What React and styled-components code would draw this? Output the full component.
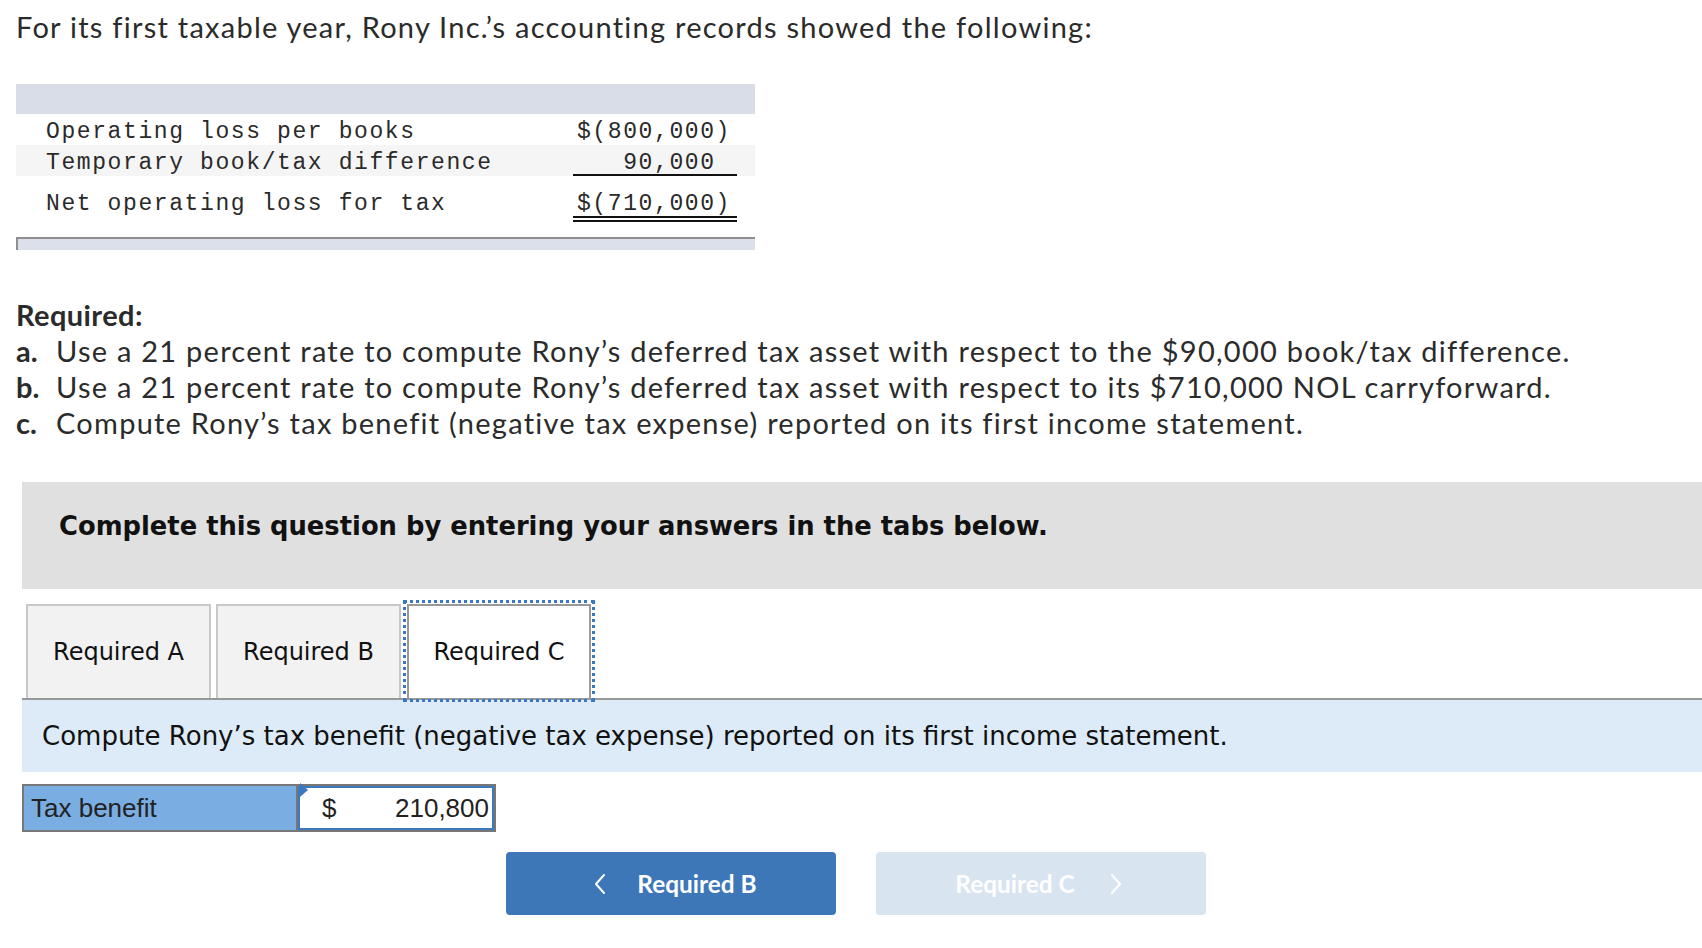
import React from 'react'
import styled, { createGlobalStyle } from 'styled-components'

const GlobalStyle = createGlobalStyle`
  body {
    margin: 0;
    background: #fff;
    color: #222;
    font-family: 'Lato', 'Liberation Sans', sans-serif;
  }
`

const Page = styled.div`
  width: 1702px;
  padding: 9px 0 30px 16px;
  box-sizing: border-box;
`

const Lead = styled.p`
  margin: 0;
  font-size: 29px;
  letter-spacing: 1.25px;
  line-height: 36px;
  color: #2b2b2b;
`

const Sheet = styled.div`
  width: 739px;
  margin-top: 39px;
  font-family: 'Liberation Mono', 'Courier New', monospace;
  font-size: 23px;
  letter-spacing: 1.6px;
  color: #2a2a2a;
`

const HeadBand = styled.div`
  height: 30px;
  background: #d8dde7;
`

const Row = styled.div`
  display: grid;
  grid-template-columns: 557px 164px;
  align-items: start;
  height: ${p => p.h || 31}px;
  background: ${p => (p.shade ? '#f5f5f5' : '#fff')};
`

const Label = styled.div`
  padding: ${p => p.top || 5}px 0 0 30px;
  line-height: 27px;
`

const Amount = styled.div`
  padding-top: ${p => p.top || 5}px;
  padding-right: 6px;
  height: ${p => p.lineH || 24}px;
  line-height: 27px;
  text-align: right;
  white-space: pre;
  border-bottom: ${p =>
    p.rule === 'double' ? '6px double #111' : p.rule ? '2px solid #111' : 'none'};
`

const FootBand = styled.div`
  margin-top: 9px;
  height: 11px;
  background: #dbe0ea;
  border-top: 2px solid #8e8e8e;
  border-left: 2px solid #8e8e8e;
`

const Required = styled.div`
  margin-top: 47px;
  font-size: 29px;
  letter-spacing: 1.25px;
  line-height: 36px;
  color: #2b2b2b;
`

const ReqTitle = styled.div`
  font-weight: 700;
  letter-spacing: 0.4px;
`

const ReqItem = styled.div`
  display: flex;
`

const ReqMark = styled.span`
  font-weight: 700;
  width: 40px;
  flex: none;
  letter-spacing: 0;
`

const Answer = styled.div`
  margin: 41px 0 0 6px;
`

const Notice = styled.div`
  height: 107px;
  background: #e0e0e0;
  padding: 26px 0 0 37px;
  box-sizing: border-box;
  font-family: 'DejaVu Sans', Verdana, sans-serif;
  font-weight: 700;
  font-size: 25.8px;
  line-height: 36px;
  color: #111;
`

const TabStrip = styled.div`
  display: flex;
  align-items: flex-end;
  gap: 5px;
  margin-top: 15px;
  padding-left: 4px;
  border-bottom: 2px solid #999;
`

const Tab = styled.div`
  width: ${p => (p.active ? 184 : 185)}px;
  height: 94px;
  box-sizing: border-box;
  margin-left: ${p => (p.active ? 1 : 0)}px;
  display: flex;
  align-items: center;
  justify-content: center;
  border: 2px solid ${p => (p.active ? '#999' : '#c8c8c8')};
  border-bottom: none;
  background: ${p => (p.active ? '#fff' : '#f2f2f2')};
  outline: ${p => (p.active ? '3px dotted #3c78c0' : 'none')};
  outline-offset: 1px;
  font-family: 'DejaVu Sans', Verdana, sans-serif;
  font-size: 24px;
  color: #111;
`

const Prompt = styled.div`
  height: 72px;
  background: #dcebf7;
  display: flex;
  align-items: center;
  padding-left: 20px;
  font-family: 'DejaVu Sans', Verdana, sans-serif;
  font-size: 26px;
  color: #111;
`

const EntryRow = styled.div`
  display: flex;
  margin-top: 12px;
  height: 48px;
  font-family: 'Liberation Sans', Arial, sans-serif;
  font-size: 26px;
  color: #222;
`

const EntryLabel = styled.div`
  width: 274px;
  box-sizing: border-box;
  background: #7aade1;
  border: 2px solid #777;
  border-right: none;
  display: flex;
  align-items: center;
  padding-left: 7px;
`

const EntryField = styled.div`
  position: relative;
  width: 200px;
  box-sizing: border-box;
  border: 2px solid #777;
  display: flex;
`

const FieldInner = styled.div`
  flex: 1;
  display: flex;
  align-items: center;
  justify-content: space-between;
  border: 2px solid #3c78c0;
  padding: 0 3px 0 22px;
  background: #fff;
`

const Flag = styled.span`
  position: absolute;
  left: 2px;
  top: 2px;
  width: 0;
  height: 0;
  border-top: 7px solid transparent;
  border-bottom: 7px solid transparent;
  border-left: 8px solid #3c78c0;
  transform: translateY(-5px);
`

const NavRow = styled.div`
  display: flex;
  gap: 40px;
  margin-top: 20px;
  padding-left: 484px;
`

const NavButton = styled.div`
  width: 330px;
  height: 63px;
  border-radius: 4px;
  display: flex;
  align-items: center;
  justify-content: center;
  gap: ${p => (p.next ? 34 : 30)}px;
  padding-left: ${p => (p.next ? 0 : 8)}px;
  padding-right: ${p => (p.next ? 4 : 0)}px;
  box-sizing: border-box;
  background: ${p => (p.next ? '#d9e4f1' : '#3d77b8')};
  color: #fff;
  font-family: 'Lato', 'Liberation Sans', sans-serif;
  font-weight: 700;
  font-size: 24.4px;
`

const Chevron = ({ dir }) => (
  <svg width="14" height="22" viewBox="0 0 14 22" fill="none">
    <polyline
      points={dir === 'left' ? '11,2 3,11 11,20' : '3,2 11,11 3,20'}
      stroke="#fff"
      strokeWidth="2"
      strokeLinecap="round"
      strokeLinejoin="round"
    />
  </svg>
)

export default function App() {
  return (
    <Page>
      <GlobalStyle />
      <Lead>For its first taxable year, Rony Inc.’s accounting records showed the following:</Lead>

      <Sheet>
        <HeadBand />
        <Row>
          <Label>Operating loss per books</Label>
          <Amount>$(800,000)</Amount>
        </Row>
        <Row shade>
          <Label>Temporary book/tax difference</Label>
          <Amount rule>{'90,000 '}</Amount>
        </Row>
        <Row h={52}>
          <Label top={15}>Net operating loss for tax</Label>
          <Amount top={15} lineH={25} rule="double">$(710,000)</Amount>
        </Row>
        <FootBand />
      </Sheet>

      <Required>
        <ReqTitle>Required:</ReqTitle>
        <ReqItem>
          <ReqMark>a.</ReqMark>
          Use a 21 percent rate to compute Rony’s deferred tax asset with respect to the $90,000 book/tax difference.
        </ReqItem>
        <ReqItem>
          <ReqMark>b.</ReqMark>
          Use a 21 percent rate to compute Rony’s deferred tax asset with respect to its $710,000 NOL carryforward.
        </ReqItem>
        <ReqItem>
          <ReqMark>c.</ReqMark>
          Compute Rony’s tax benefit (negative tax expense) reported on its first income statement.
        </ReqItem>
      </Required>

      <Answer>
        <Notice>Complete this question by entering your answers in the tabs below.</Notice>
        <TabStrip>
          <Tab>Required A</Tab>
          <Tab>Required B</Tab>
          <Tab active>Required C</Tab>
        </TabStrip>
        <Prompt>Compute Rony’s tax benefit (negative tax expense) reported on its first income statement.</Prompt>
        <EntryRow>
          <EntryLabel>Tax benefit</EntryLabel>
          <EntryField>
            <Flag />
            <FieldInner>
              <span>$</span>
              <span>210,800</span>
            </FieldInner>
          </EntryField>
        </EntryRow>
        <NavRow>
          <NavButton>
            <Chevron dir="left" />
            Required B
          </NavButton>
          <NavButton next>
            Required C
            <Chevron dir="right" />
          </NavButton>
        </NavRow>
      </Answer>
    </Page>
  )
}
